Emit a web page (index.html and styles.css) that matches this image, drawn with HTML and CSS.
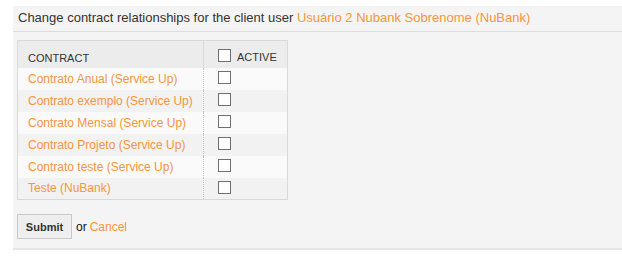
FILE: index.html
```html
<!DOCTYPE html>
<html lang="pt">
  <head>
    <meta charset="UTF-8" />
    <title>Contract relationships</title>
    <link rel="stylesheet" href="styles.css">
  </head>
  <body>
    <div class="panel">
      <h2 class="panel-title">
        Change contract relationships for the client user
        <a href="#">Usuário 2 Nubank Sobrenome (NuBank)</a>
      </h2>
      <form class="panel-body">
        <table class="grid">
          <thead>
            <tr>
              <th class="col-name">Contract</th>
              <th class="col-active"><input type="checkbox" />Active</th>
            </tr>
          </thead>
          <tbody>
            <tr>
              <td class="col-name"><a href="#">Contrato Anual (Service Up)</a></td>
              <td class="col-active"><input type="checkbox" /></td>
            </tr>
            <tr>
              <td class="col-name"><a href="#">Contrato exemplo (Service Up)</a></td>
              <td class="col-active"><input type="checkbox" /></td>
            </tr>
            <tr>
              <td class="col-name"><a href="#">Contrato Mensal (Service Up)</a></td>
              <td class="col-active"><input type="checkbox" /></td>
            </tr>
            <tr>
              <td class="col-name"><a href="#">Contrato Projeto (Service Up)</a></td>
              <td class="col-active"><input type="checkbox" /></td>
            </tr>
            <tr>
              <td class="col-name"><a href="#">Contrato teste (Service Up)</a></td>
              <td class="col-active"><input type="checkbox" /></td>
            </tr>
            <tr>
              <td class="col-name"><a href="#">Teste (NuBank)</a></td>
              <td class="col-active"><input type="checkbox" /></td>
            </tr>
          </tbody>
        </table>
        <div class="actions">
          <button type="button" class="btn">Submit</button>
          <span class="or">or</span>
          <a href="#">Cancel</a>
        </div>
      </form>
    </div>
  </body>
</html>
```

FILE: styles.css
```css
* {
  margin: 0;
  padding: 0;
  box-sizing: border-box;
}
body {
  background: #fff;
  font-family: "Liberation Sans", Arial, sans-serif;
  font-size: 12px;
  color: #333;
  padding: 6px 0 0 13px;
}
a {
  color: #f7953c;
  text-decoration: none;
}
.panel {
  background: #f4f4f4;
  border-bottom: 2px solid #e6e6e6;
  height: 244px;
}
.panel-title {
  font-size: 13px;
  font-weight: normal;
  color: #333;
  height: 26px;
  line-height: 24px;
  padding: 0 5px;
  border-bottom: 1px solid #dcdcdc;
}
.panel-body {
  padding: 8px 4px 0;
}
.grid {
  border-collapse: collapse;
  border: 1px solid #d9d9d9;
  width: 271px;
}
.grid th {
  background: #ececec;
  font-weight: normal;
  text-transform: uppercase;
  font-size: 11px;
  color: #333;
  text-align: left;
  height: 27px;
  vertical-align: bottom;
  padding: 0 10px 4px;
}
.grid th.col-active {
  border-left: 1px solid #d9d9d9;
  padding-bottom: 5px;
}
.grid td {
  height: 22px;
  padding: 0 10px;
}
.grid td.col-active {
  border-left: 1px dotted #c4c4c4;
}
.grid .col-name {
  width: 186px;
}
.grid tbody tr:nth-child(odd) {
  background: #fafafa;
}
.grid tbody tr:nth-child(even) {
  background: #f2f2f2;
}
.grid input[type="checkbox"] {
  appearance: none;
  -webkit-appearance: none;
  width: 13px;
  height: 13px;
  border: 1px solid #6f6f6f;
  background: #fff;
  margin: 0 0 0 4px;
  vertical-align: middle;
  display: inline-block;
}
.grid td input[type="checkbox"] {
  display: block;
  position: relative;
  top: -1px;
}
.grid th input[type="checkbox"] {
  margin: 0 6px 1px 4px;
  vertical-align: -2px;
}
.actions {
  margin-top: 14px;
  display: flex;
  align-items: center;
  gap: 4px;
}
.btn {
  font-family: "Liberation Sans", Arial, sans-serif;
  font-size: 11px;
  font-weight: bold;
  color: #333;
  background: #eeeeee;
  border: 1px solid #c8c8c8;
  width: 55px;
  height: 25px;
}
.or {
  color: #111;
  margin-right: -1px;
}
```
